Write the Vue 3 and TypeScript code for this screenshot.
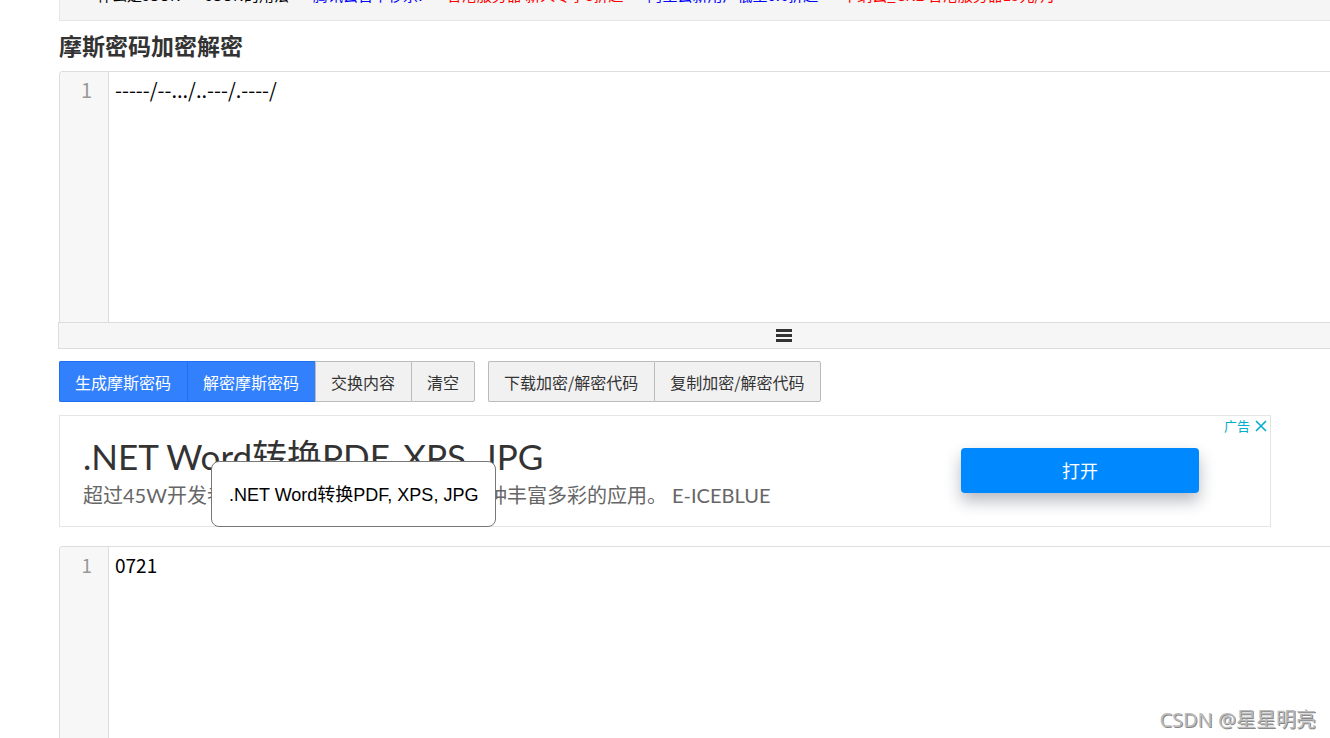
<script setup lang="ts">
import { ref } from 'vue'

interface NavLink {
  text: string
  tone: string
}

const links: NavLink[] = [
  { text: '什么是JSON', tone: 'plain' },
  { text: 'JSON的用法', tone: 'plain' },
  { text: '腾讯云百单秒杀!', tone: 'blue' },
  { text: '香港服务器 新人专享8折起', tone: 'red' },
  { text: '阿里云新用户低至0.6折起', tone: 'blue' },
  { text: '华纳云_CN2 香港服务器15元/月', tone: 'red' },
]

const source = ref('-----/--.../..---/.----/')
const result = ref('0721')

const codes: Record<string, string> = {
  '-----': '0', '.----': '1', '..---': '2', '...--': '3', '....-': '4',
  '.....': '5', '-....': '6', '--...': '7', '---..': '8', '----.': '9',
}

function encode(): void {
  result.value = [...source.value]
    .map((c) => Object.keys(codes).find((k) => codes[k] === c) ?? c)
    .join('/')
}
function decode(): void {
  result.value = source.value.split('/').map((c) => codes[c] ?? c).join('')
}
function swap(): void {
  const previous = source.value
  source.value = result.value
  result.value = previous
}
function clear(): void {
  source.value = ''
  result.value = ''
}
function copy(): void {
  void navigator.clipboard?.writeText(result.value)
}
function download(): void {
  const link = document.createElement('a')
  link.href = URL.createObjectURL(new Blob([result.value]))
  link.download = 'morse.txt'
  link.click()
}
</script>

<template>
  <div class="page">
    <nav class="links">
      <a v-for="link in links" :key="link.text" href="#" :class="link.tone">{{ link.text }}</a>
    </nav>

    <h1>摩斯密码加密解密</h1>

    <section class="editor first">
      <div class="gutter">1</div>
      <textarea v-model="source" aria-label="输入内容" spellcheck="false"></textarea>
    </section>
    <button class="resizer" type="button" aria-label="调整高度">
      <svg width="16" height="14" viewBox="0 0 16 14" aria-hidden="true">
        <path d="M0 0h16v3H0zM0 5h16v3H0zM0 10h16v3H0z" fill="#333" />
      </svg>
    </button>

    <div class="toolbar">
      <div class="group">
        <button class="primary" type="button" @click="encode">生成摩斯密码</button>
        <button class="primary" type="button" @click="decode">解密摩斯密码</button>
        <button type="button" @click="swap">交换内容</button>
        <button type="button" @click="clear">清空</button>
      </div>
      <div class="group">
        <button type="button" @click="download">下载加密/解密代码</button>
        <button type="button" @click="copy">复制加密/解密代码</button>
      </div>
    </div>

    <aside class="ad">
      <div class="copy">
        <a class="headline" href="#">.NET Word转换PDF, XPS, JPG</a>
        <a class="detail" href="#">超过45W开发者使用的办公组件，轻松创建各种丰富多彩的应用。 <span>E-ICEBLUE</span></a>
      </div>
      <button class="open" type="button">打开</button>
      <div class="choices">
        <span>广告</span>
        <button type="button" aria-label="关闭广告">
          <svg width="12" height="12" viewBox="0 0 12 12" aria-hidden="true">
            <path d="M1 1l10 10M11 1L1 11" stroke="#00aecd" stroke-width="1.6" fill="none" />
          </svg>
        </button>
      </div>
      <div class="tip" role="tooltip">.NET Word转换PDF, XPS, JPG</div>
    </aside>

    <section class="editor second">
      <div class="gutter">1</div>
      <textarea v-model="result" aria-label="输出结果" spellcheck="false"></textarea>
    </section>

    <div class="watermark">CSDN @星星明亮</div>
  </div>
</template>

<style>
body {
  margin: 0;
  background: #fff;
}
</style>

<style scoped>
.page {
  position: relative;
  box-sizing: border-box;
  display: flex;
  flex-direction: column;
  height: 100vh;
  padding-left: 59px;
  overflow: hidden;
  color: #333;
  font-family: "Noto Sans CJK SC", sans-serif;
  font-size: 16px;
}
button,
textarea {
  margin: 0;
  font-family: inherit;
}
button {
  cursor: pointer;
}
a {
  text-decoration: none;
}
.links {
  flex: none;
  box-sizing: border-box;
  display: flex;
  align-items: flex-end;
  gap: 24px;
  height: 21px;
  padding: 0 0 15px 37px;
  overflow: hidden;
  border-bottom: 1px solid #e6e6e6;
  border-left: 1px solid #e6e6e6;
  background: #f5f5f5;
  font-size: 15px;
  line-height: 20px;
  white-space: nowrap;
}
.plain {
  color: #000;
}
.blue {
  color: #00f;
}
.red {
  color: #f00;
}
h1 {
  margin: 0;
  padding-bottom: 2px;
  font-size: 23px;
  font-weight: 700;
  line-height: 48px;
}
.editor {
  display: flex;
  box-sizing: border-box;
  border: 1px solid #ddd;
  border-right: 0;
  border-bottom: 0;
  border-radius: 4px 0 0 0;
  overflow: hidden;
  font-size: 20px;
  line-height: 26px;
}
.first {
  flex: none;
  height: 251px;
}
.second {
  flex: 1;
  margin-top: 19px;
  font-size: 19px;
}
.gutter {
  box-sizing: border-box;
  width: 49px;
  padding: 5px 16px 0 0;
  border-right: 1px solid #ddd;
  background: #f7f7f7;
  color: #999;
  text-align: right;
}
textarea {
  flex: 1;
  padding: 5px 6px 0;
  border: 0;
  outline: 0;
  resize: none;
  background: #fff;
  color: #000;
  font-size: inherit;
  line-height: inherit;
}
.resizer {
  flex: none;
  display: flex;
  align-items: center;
  justify-content: center;
  box-sizing: border-box;
  height: 27px;
  margin: 0 -180px 0 -1px;
  padding: 0;
  border: 1px solid #ddd;
  background: #f6f6f6;
}
.toolbar {
  flex: none;
  display: flex;
  gap: 13px;
  margin: 12px 0 13px;
}
.group {
  display: flex;
}
.group button {
  box-sizing: border-box;
  height: 41px;
  padding: 0 16px 0 15px;
  border: 1px solid #bbb;
  border-right-width: 0;
  background: #f1f1f1;
  color: #333;
  font-size: 16px;
  white-space: nowrap;
}
.group button:first-child {
  border-radius: 2px 0 0 2px;
}
.group button:last-child {
  padding-right: 15px;
  border-right-width: 1px;
  border-radius: 0 2px 2px 0;
}
.group .primary {
  border-color: #1f6ff5;
  background: #3280fc;
  color: #fff;
}
.ad {
  position: relative;
  flex: none;
  box-sizing: border-box;
  display: flex;
  align-items: center;
  justify-content: space-between;
  height: 112px;
  margin-right: 59px;
  padding: 0 71px 2px 23px;
  border: 1px solid #e5e5e5;
}
.copy {
  display: flex;
  flex-direction: column;
  padding-top: 8px;
  white-space: nowrap;
}
.headline {
  color: #333;
  font-family: Lato, "Noto Sans CJK SC", sans-serif;
  font-size: 35px;
  line-height: 42px;
}
.detail {
  color: #666;
  font-family: Lato, "Noto Sans CJK SC", sans-serif;
  font-size: 20px;
  line-height: 36px;
}
.open {
  width: 238px;
  height: 45px;
  padding: 0;
  border: 0;
  border-radius: 4px;
  background: #08f;
  box-shadow: 0 8px 16px rgba(30, 40, 60, 0.32);
  color: #fff;
  font-size: 18px;
}
.choices {
  position: absolute;
  top: 0;
  right: 3px;
  display: flex;
  align-items: center;
  gap: 5px;
  color: #00aecd;
  font-size: 13px;
  line-height: 20px;
}
.choices button {
  display: flex;
  padding: 0;
  border: 0;
  background: none;
}
.tip {
  position: absolute;
  top: 45px;
  left: 151px;
  box-sizing: border-box;
  height: 66px;
  padding: 0 17px;
  border: 1px solid #777;
  border-radius: 8px;
  background: #fff;
  color: #000;
  font-family: "Liberation Sans", "Noto Sans CJK SC", sans-serif;
  font-size: 18px;
  line-height: 66px;
  white-space: nowrap;
}
.watermark {
  position: absolute;
  right: 14px;
  bottom: 4px;
  color: #bbb;
  font-family: "Noto Sans", "Noto Sans CJK SC", sans-serif;
  font-size: 20px;
  line-height: 28px;
  text-shadow: 1px 1px 0 #888;
}
</style>
